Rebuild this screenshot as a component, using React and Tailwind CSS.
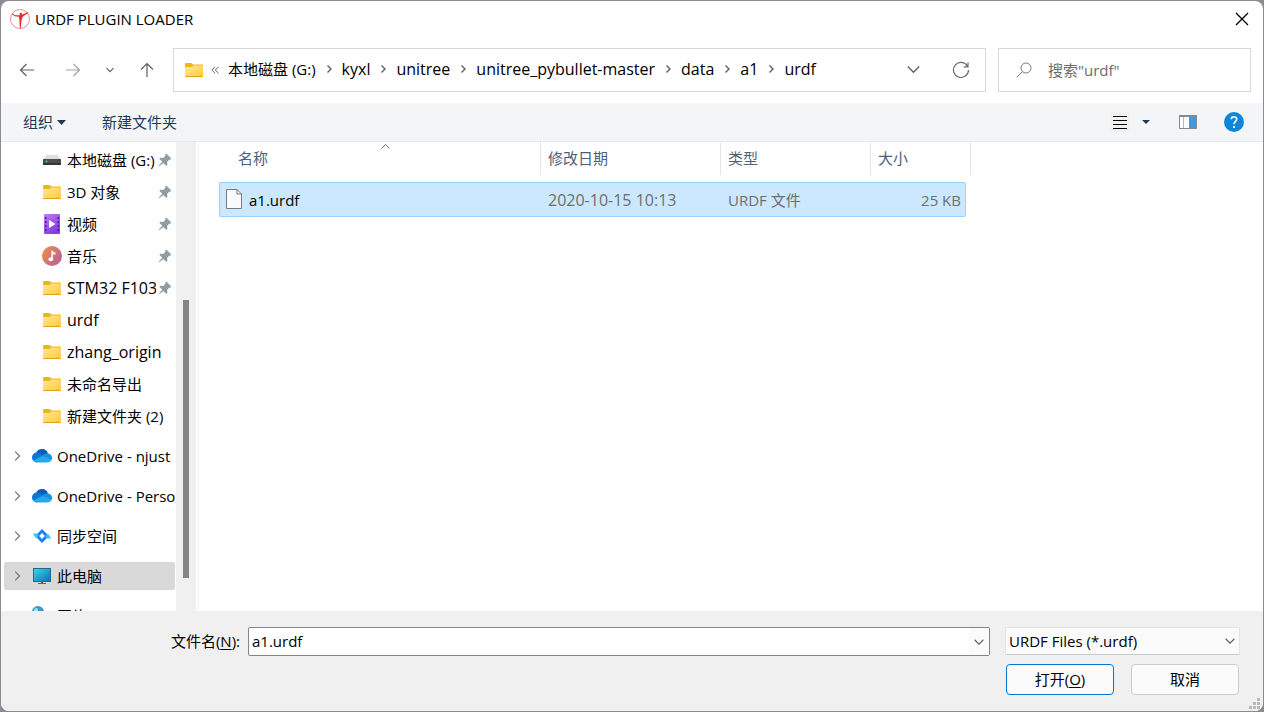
import { useState } from "react";

const quickAccess = [
  { name: "本地磁盘 (G:)", icon: DriveIcon, pinned: true },
  { name: "3D 对象", icon: FolderIcon, pinned: true },
  { name: "视频", icon: VideoIcon, pinned: true },
  { name: "音乐", icon: MusicIcon, pinned: true },
  { name: "STM32 F103", icon: FolderIcon, pinned: true, latin: true },
  { name: "urdf", icon: FolderIcon, latin: true },
  { name: "zhang_origin", icon: FolderIcon, latin: true },
  { name: "未命名导出", icon: FolderIcon },
  { name: "新建文件夹 (2)", icon: FolderIcon },
];

const treeRoots = [
  { name: "OneDrive - njust", icon: CloudIcon },
  { name: "OneDrive - Personal", icon: CloudIcon },
  { name: "同步空间", icon: SyncIcon },
  { name: "此电脑", icon: ComputerIcon, selected: true },
  { name: "网络", icon: NetworkIcon },
];

const drive = "本地磁盘 (G:)";
const crumbs = ["kyxl", "unitree", "unitree_pybullet-master", "data", "a1", "urdf"];

function FolderIcon() {
  return (
    <svg width="20" height="20" viewBox="0 0 20 20" className="shrink-0">
      <defs>
        <linearGradient id="folder" x1="0" y1="0" x2="1" y2="1">
          <stop offset="0" stopColor="#ffe8a0" />
          <stop offset="1" stopColor="#ffc937" />
        </linearGradient>
      </defs>
      <path d="M1 4a1 1 0 0 1 1-1h5.500l1.500 1.500H18a1 1 0 0 1 1 1V9H1z" fill="#f5b418" />
      <path d="M1 7h7l1.500-1.500H19V16a1 1 0 0 1-1 1H2a1 1 0 0 1-1-1z" fill="url(#folder)" />
      <path d="M1 16h18a1 1 0 0 1-1 1H2a1 1 0 0 1-1-1z" fill="#e3a21a" />
    </svg>
  );
}

function DriveIcon() {
  return (
    <svg width="20" height="20" viewBox="0 0 20 20" className="shrink-0">
      <path d="M4.500 5h11L19 10H1z" fill="#dcdfe2" />
      <rect x="1" y="9" width="18" height="6" rx="0.500" fill="#4b4d4f" />
      <rect x="1" y="13" width="18" height="2" fill="#333537" />
      <circle cx="4.500" cy="11.500" r="1" fill="#3bdc54" />
    </svg>
  );
}

function VideoIcon() {
  return (
    <svg width="20" height="20" viewBox="0 0 20 20" className="shrink-0">
      <defs>
        <linearGradient id="video" x1="0" y1="0" x2="0.600" y2="1">
          <stop offset="0" stopColor="#bf7bf4" />
          <stop offset="1" stopColor="#7d3be0" />
        </linearGradient>
      </defs>
      <rect x="2" y="0" width="16" height="20" rx="1" fill="url(#video)" />
      <path
        d="M3 3h1.500v2H3zM3 7h1.500v2H3zM3 11h1.500v2H3zM3 15h1.500v2H3zM15.500 3H17v2h-1.500zM15.500 7H17v2h-1.500zM15.500 11H17v2h-1.500zM15.500 15H17v2h-1.500z"
        fill="#4a1d96"
      />
      <path d="M7 6l6.500 4L7 14z" fill="#fff" />
    </svg>
  );
}

function MusicIcon() {
  return (
    <svg width="20" height="20" viewBox="0 0 20 20" className="shrink-0">
      <defs>
        <linearGradient id="music" x1="0" y1="0.200" x2="1" y2="0.900">
          <stop offset="0" stopColor="#f08a4b" />
          <stop offset="1" stopColor="#b0609c" />
        </linearGradient>
      </defs>
      <circle cx="10" cy="10" r="10" fill="url(#music)" />
      <ellipse cx="8.800" cy="13.200" rx="2.300" ry="2" fill="#fff" />
      <path d="M9.400 4.500h1.200c.3 1.500 1 1.900 2.900 2.100v2c-1.200 0-2-.2-2.600-.6v5.200H9.400z" fill="#fff" />
    </svg>
  );
}

function CloudIcon() {
  return (
    <svg width="20" height="20" viewBox="0 0 20 20" className="shrink-0">
      <path d="M4 7A6.400 6.400 0 0 1 16 7.500L11 12z" fill="#0a5fb4" />
      <path d="M5 16.500a5 5 0 0 1-5-5C0 8.500 2.400 6.500 5 6.500c1.500 0 2.500.3 3.500 1L13 11z" fill="#0f78d4" />
      <path d="M15.500 7.200A4.600 4.600 0 0 1 20 12c0 1-.2 1.600-.6 2.300L10 10.300a6 6 0 0 1 5.500-3.100z" fill="#1490df" />
      <path d="M1 14.500L10.500 10 19.500 14A4.400 4.400 0 0 1 15.800 16.500H5a5 5 0 0 1-4-2z" fill="#28a8ea" />
    </svg>
  );
}

function SyncIcon() {
  return (
    <svg width="20" height="20" viewBox="0 0 20 20" className="shrink-0">
      <path d="M3.800 9.200L10 3l6.200 6.200-2.400 1.800L10 7 6.200 11z" fill="#1d7df2" />
      <path d="M16.200 10.800L10 17l-6.200-6.200L6.200 9 10 13 13.800 9z" fill="#1d7df2" />
      <path d="M.8 7.500H5l1.500 2-1.300 2.300H3.500z" fill="#2fc8f7" />
      <path d="M19.200 12.500H15l-1.500-2 1.300-2.300h1.700z" fill="#2fc8f7" />
    </svg>
  );
}

function ComputerIcon() {
  return (
    <svg width="20" height="20" viewBox="0 0 20 20" className="shrink-0">
      <defs>
        <linearGradient id="screen" x1="0" y1="0" x2="1" y2="1">
          <stop offset="0" stopColor="#36dbe4" />
          <stop offset="1" stopColor="#0f6cbd" />
        </linearGradient>
      </defs>
      <rect x="1.500" y="2.500" width="17" height="13" fill="url(#screen)" stroke="#23688f" />
      <path d="M9 16h2v1.500H9zM6 17h8v1H6z" fill="#5d6770" />
    </svg>
  );
}

function NetworkIcon() {
  return (
    <svg width="20" height="20" viewBox="0 0 20 20" className="shrink-0">
      <circle cx="6" cy="6" r="6" fill="#3e97cb" />
      <path d="M2 4c2-3 4-2 4 0s-3 3-4 2z" fill="#a9dcf2" />
      <rect x="5" y="8" width="14" height="9" fill="#1b86c9" />
    </svg>
  );
}

function PinIcon() {
  return (
    <svg width="14" height="14" viewBox="0 0 14 14" className="shrink-0 fill-[#8f9ca4]">
      <path d="M8.300.6L13.400 5.700 12.300 6.700 11.500 6.500 9.200 8.800 9.300 12 8.300 13 5.300 9.900 1.200 13.300.7 12.800 4.200 8.800 1.300 5.800 2.300 4.800 5.300 4.900 7.600 2.600 7.300 1.600z" />
    </svg>
  );
}

function Chevron({ className = "", direction = "right", size = 8, weight = 1 }) {
  const paths = {
    right: "M2.500 0.500L6 4 2.500 7.500",
    down: "M0.500 2.200L4 5.700 7.500 2.200",
    up: "M0.500 5.700L4 2.200 7.500 5.700",
  };
  return (
    <svg width={size} height={size} viewBox="0 0 8 8" className={`shrink-0 overflow-visible fill-none stroke-current ${className}`}>
      <path d={paths[direction]} strokeWidth={weight} vectorEffect="non-scaling-stroke" />
    </svg>
  );
}

function ArrowIcon({ className = "" }) {
  return (
    <svg width="16" height="16" viewBox="0 0 16 16" className={`fill-none stroke-current ${className}`}>
      <path d="M15 8H1.500M7.500 2L1.500 8l6 6" strokeWidth="1.200" />
    </svg>
  );
}

function TitleBar() {
  return (
    <header className="flex h-[36px] shrink-0 items-center pl-[9px] pr-[13px]">
      <svg width="20" height="20" viewBox="0 0 20 20" className="shrink-0">
        <circle cx="10" cy="10" r="9.500" fill="#fff" stroke="#f08a8c" />
        <path
          d="M2 4.500l3.500 1.700 4 .1 3-.8L18 3.200l.5.800-5 3-1.300 1.600-.8 3.400L10.800 19h-1l-.3-7.500-.5-3.700L5 7.200 1.800 5.300z"
          fill="#e8262c"
        />
        <circle cx="10.800" cy="5" r="1.200" fill="#e8262c" />
      </svg>
      <h1 className="ml-[5px] flex-1 leading-5">URDF PLUGIN LOADER</h1>
      <button type="button" aria-label="关闭">
        <svg width="16" height="16" viewBox="0 0 16 16" className="fill-none stroke-black">
          <path d="M2 2l12 12M14 2L2 14" strokeWidth="1.300" />
        </svg>
      </button>
    </header>
  );
}

function NavigationRow() {
  return (
    <nav className="flex h-[66px] shrink-0 items-center pb-px pr-3">
      <div className="flex w-[172px] shrink-0 items-center px-[3px] text-[#5f5f5f]">
        <button type="button" aria-label="后退" className="flex w-[46px] justify-center">
          <ArrowIcon />
        </button>
        <button type="button" aria-label="前进" className="flex w-[46px] justify-center text-[#a3a3a3]">
          <ArrowIcon className="rotate-180" />
        </button>
        <button type="button" aria-label="最近位置" className="flex w-7 justify-center">
          <Chevron direction="down" weight={1.2} />
        </button>
        <button type="button" aria-label="上移" className="flex w-[46px] justify-center">
          <ArrowIcon className="rotate-90" />
        </button>
      </div>

      <div className="flex h-11 min-w-0 flex-1 items-center border border-[#d9d9d9] pl-[10px]">
        <FolderIcon />
        <svg width="8" height="8" viewBox="0 0 8 8" className="ml-[7px] mr-[9px] shrink-0 fill-none stroke-[#5f5f5f]">
          <path d="M4 .8L.8 4 4 7.200M7.500.8L4.300 4l3.200 3.200" />
        </svg>
        <ol className="flex min-w-0 flex-1 items-center overflow-hidden whitespace-nowrap pb-[2px] leading-6">
          <li>
            <button type="button">{drive}</button>
          </li>
          {crumbs.map((crumb) => (
            <li key={crumb} className="flex items-center text-base leading-6">
              <span className="flex w-[26px] justify-center text-[#5f5f5f]">
                <Chevron weight={1.4} />
              </span>
              <button type="button">{crumb}</button>
            </li>
          ))}
        </ol>
        <button type="button" aria-label="以前的位置" className="flex w-12 justify-center text-[#5f5f5f]">
          <Chevron direction="down" size={13} weight={1.3} />
        </button>
        <button type="button" aria-label="刷新" className="flex w-12 justify-center">
          <svg width="18" height="18" viewBox="0 0 18 18" className="fill-none stroke-[#6a6a6a]">
            <path d="M15.500 5.200A7.500 7.500 0 1 0 16.500 9M16 1.500v4.300h-4.300" strokeWidth="1.200" />
          </svg>
        </button>
      </div>

      <label className="ml-3 flex h-11 w-[253px] items-center border border-[#d9d9d9] pl-[17px]">
        <svg width="16" height="16" viewBox="0 0 16 16" className="shrink-0 fill-none stroke-[#7a7a7a]">
          <circle cx="10" cy="6" r="5" />
          <path d="M6.500 9.500L.7 15.300" />
        </svg>
        <input
          type="search"
          aria-label="搜索"
          placeholder='搜索"urdf"'
          className="ml-4 h-6 min-w-0 flex-1 outline-none placeholder:text-[#6d6d6d]"
        />
      </label>
    </nav>
  );
}

function Toolbar() {
  return (
    <div className="flex h-[39px] shrink-0 items-center border-b border-[#e8e9ea] bg-[#f4f5f7] pl-[22px] pr-[19px] text-[#1e395b]">
      <button type="button" className="flex items-center gap-1 leading-6">
        组织
        <svg width="9" height="5" viewBox="0 0 9 5" className="fill-current">
          <path d="M0 0h9L4.500 5z" />
        </svg>
      </button>
      <button type="button" className="ml-9 leading-6">
        新建文件夹
      </button>
      <div className="ml-auto flex items-center">
        <button type="button" aria-label="更改视图" className="flex size-5 items-center justify-center bg-[#f1f1f1]">
          <svg width="14" height="13" viewBox="0 0 14 13" className="fill-black">
            <path d="M0 0h14v1H0zM0 4h14v1H0zM0 8h14v1H0zM0 12h14v1H0z" />
          </svg>
        </button>
        <button type="button" aria-label="更多选项" className="ml-3 flex h-5 w-2 items-center">
          <svg width="8" height="4" viewBox="0 0 8 4" className="fill-current">
            <path d="M0 0h8L4 4z" />
          </svg>
        </button>
        <button type="button" aria-label="预览窗格" className="ml-7">
          <svg width="20" height="16" viewBox="0 0 20 16">
            <path d="M1.500 1.500h17v13h-17z" fill="#fff" stroke="#858a90" />
            <path d="M1 1h18v2H1z" fill="#858a90" />
            <path d="M5 3h1v11H5z" fill="#b5b9bd" />
            <path d="M11 3h7v11h-7z" fill="#3f9ae6" />
          </svg>
        </button>
        <button
          type="button"
          aria-label="获取帮助"
          className="ml-[26px] flex size-5 items-center justify-center rounded-full bg-[#0f86d8]"
        >
          <svg width="12" height="14" viewBox="0 0 12 14" className="fill-none stroke-white">
            <path d="M3.300 4.300C3.300 1 8.700 1 8.700 4.200 8.700 6.400 6 6.300 6 9.200" strokeWidth="1.600" />
            <path d="M6 11v2" strokeWidth="1.800" />
          </svg>
        </button>
      </div>
    </div>
  );
}

function Sidebar() {
  return (
    <aside className="flex w-[195px] shrink-0 overflow-hidden whitespace-nowrap">
      <div className="min-w-0 flex-1 pt-[2px]">
        <ul>
          {quickAccess.map(({ name, icon: Icon, pinned, latin }) => (
            <li key={name} className={`flex h-8 items-center pl-[41px] pr-1 ${latin ? "text-base" : ""}`}>
              <Icon />
              <span className={`ml-[5px] overflow-hidden leading-6 ${pinned ? "w-[89px]" : "flex-1"}`}>{name}</span>
              {pinned && (
                <span className="ml-[2px]">
                  <PinIcon />
                </span>
              )}
            </li>
          ))}
        </ul>
        <ul className="mt-[10px] flex flex-col gap-3 pl-[3px] pr-px">
          {treeRoots.map(({ name, icon: Icon, selected }) => (
            <li key={name} className={`flex h-7 items-center rounded-xs pl-2 ${selected ? "bg-[#d9d9d9]" : ""}`}>
              <Chevron size={10} weight={1.4} className="text-[#7d7d7d]" />
              <span className="ml-[10px]">
                <Icon />
              </span>
              <span className="ml-[5px] flex-1 overflow-hidden leading-6">{name}</span>
            </li>
          ))}
        </ul>
      </div>
      <div className="flex w-5 flex-col bg-[#f0f0f0] pb-[33px]">
        <div className="ml-[7px] mt-auto h-[278px] w-[6px] bg-[#858585]" />
      </div>
    </aside>
  );
}

function FileList() {
  const cell = "flex h-[35px] items-center border-y border-[#99d1ff] bg-[#cce8ff] pl-[7px]";
  const heading = "border-r border-[#e5e5e5] p-0 pb-[2px] pl-[7px] font-normal";
  return (
    <main className="ml-[2px] min-w-0 flex-1 overflow-hidden border-l border-[#f3f3f3] pl-5">
      <table className="w-[752px] table-fixed border-separate border-spacing-0 text-left">
        <colgroup>
          <col className="w-[322px]" />
          <col className="w-[180px]" />
          <col className="w-[150px]" />
          <col className="w-[100px]" />
        </colgroup>
        <thead className="text-[#4c607a]">
          <tr className="h-[33px]">
            <th className="relative border-r border-[#e5e5e5] p-0 pb-[2px] pl-[19px] font-normal">
              名称
              <Chevron direction="up" size={9} className="absolute left-[162px] top-0 text-[#6a6a6a]" />
            </th>
            <th className={heading}>修改日期</th>
            <th className={heading}>类型</th>
            <th className={heading}>大小</th>
          </tr>
        </thead>
        <tbody className="text-[#6d6d6d]">
          <tr aria-selected="true">
            <td className="p-0 pt-[7px]">
              <div className={`${cell} rounded-l-xs border-l text-black`}>
                <svg width="16" height="20" viewBox="0 0 16 20" className="-mt-[2px] -ml-px mr-[7px]">
                  <path d="M.5.500h10.500l4.500 4.500v14.500H.5z" fill="#fafafa" stroke="#7a7a7a" />
                  <path d="M11 .5V5h4.500" fill="none" stroke="#7a7a7a" />
                </svg>
                a1.urdf
              </div>
            </td>
            <td className="p-0 pt-[7px]">
              <div className={`${cell} text-base`}>2020-10-15 10:13</div>
            </td>
            <td className="p-0 pt-[7px]">
              <div className={cell}>URDF 文件</div>
            </td>
            <td className="p-0 pr-[5px] pt-[7px]">
              <div className={`${cell} justify-end rounded-r-xs border-r pr-1`}>25 KB</div>
            </td>
          </tr>
        </tbody>
      </table>
    </main>
  );
}

function Footer() {
  const [fileName, setFileName] = useState("a1.urdf");

  return (
    <footer className="relative flex h-[100px] shrink-0 flex-col bg-[#f0f0f0] pr-[23px] pt-4">
      <div className="flex items-start">
        <label htmlFor="file-name" className="w-[247px] shrink-0 pr-2 text-right leading-7">
          文件名(<u className="underline-offset-2">N</u>):
        </label>
        <div className="flex h-[29px] min-w-0 flex-1 items-center rounded-xs border border-[#858585] bg-white">
          <input
            id="file-name"
            type="text"
            value={fileName}
            onChange={(e) => setFileName(e.target.value)}
            className="h-full min-w-0 flex-1 pb-px pl-[3px] outline-none"
          />
          <button type="button" aria-label="历史记录" className="flex h-full w-5 items-center justify-center bg-[#fbfbfb] text-[#5f5f5f]">
            <Chevron direction="down" size={10} weight={1.1} />
          </button>
        </div>
        <div className="relative ml-[15px] w-[235px] shrink-0">
          <select
            aria-label="文件类型"
            className="block h-7 w-full appearance-none rounded-xs border border-[#e3e3e3] border-b-[#c9c9c9] bg-[#fbfbfb] pl-[3px] outline-none"
          >
            <option>URDF Files (*.urdf)</option>
          </select>
          <Chevron
            direction="down"
            size={10}
            weight={1.1}
            className="pointer-events-none absolute right-[5px] top-[9px] text-[#5f5f5f]"
          />
        </div>
      </div>
      <div className="mt-2 flex justify-end gap-[17px] pr-px">
        <button type="button" className="h-[31px] w-[108px] rounded-sm border border-[#0078d4] bg-[#fbfbfb] pb-[2px]">
          打开(<u className="underline-offset-2">O</u>)
        </button>
        <button type="button" className="h-[31px] w-[108px] rounded-sm border border-[#cccccc] bg-[#fbfbfb] pb-[2px]">
          取消
        </button>
      </div>
      <svg width="11" height="11" viewBox="0 0 11 11" className="absolute bottom-[2px] right-[3px] fill-[#b9b9b9]">
        <path d="M8 0h3v3H8zM8 4h3v3H8zM8 8h3v3H8zM4 4h3v3H4zM4 8h3v3H4zM0 8h3v3H0z" />
      </svg>
    </footer>
  );
}

export default function App() {
  return (
    <div className="flex h-screen flex-col bg-[#8b8c90] p-px font-['Open_Sans','Noto_Sans_CJK_SC',sans-serif] text-[15px] leading-5 text-black">
      <div className="flex min-h-0 flex-1 flex-col overflow-hidden rounded-lg bg-white">
        <TitleBar />
        <NavigationRow />
        <Toolbar />
        <div className="flex min-h-0 flex-1">
          <Sidebar />
          <FileList />
        </div>
        <Footer />
      </div>
    </div>
  );
}
